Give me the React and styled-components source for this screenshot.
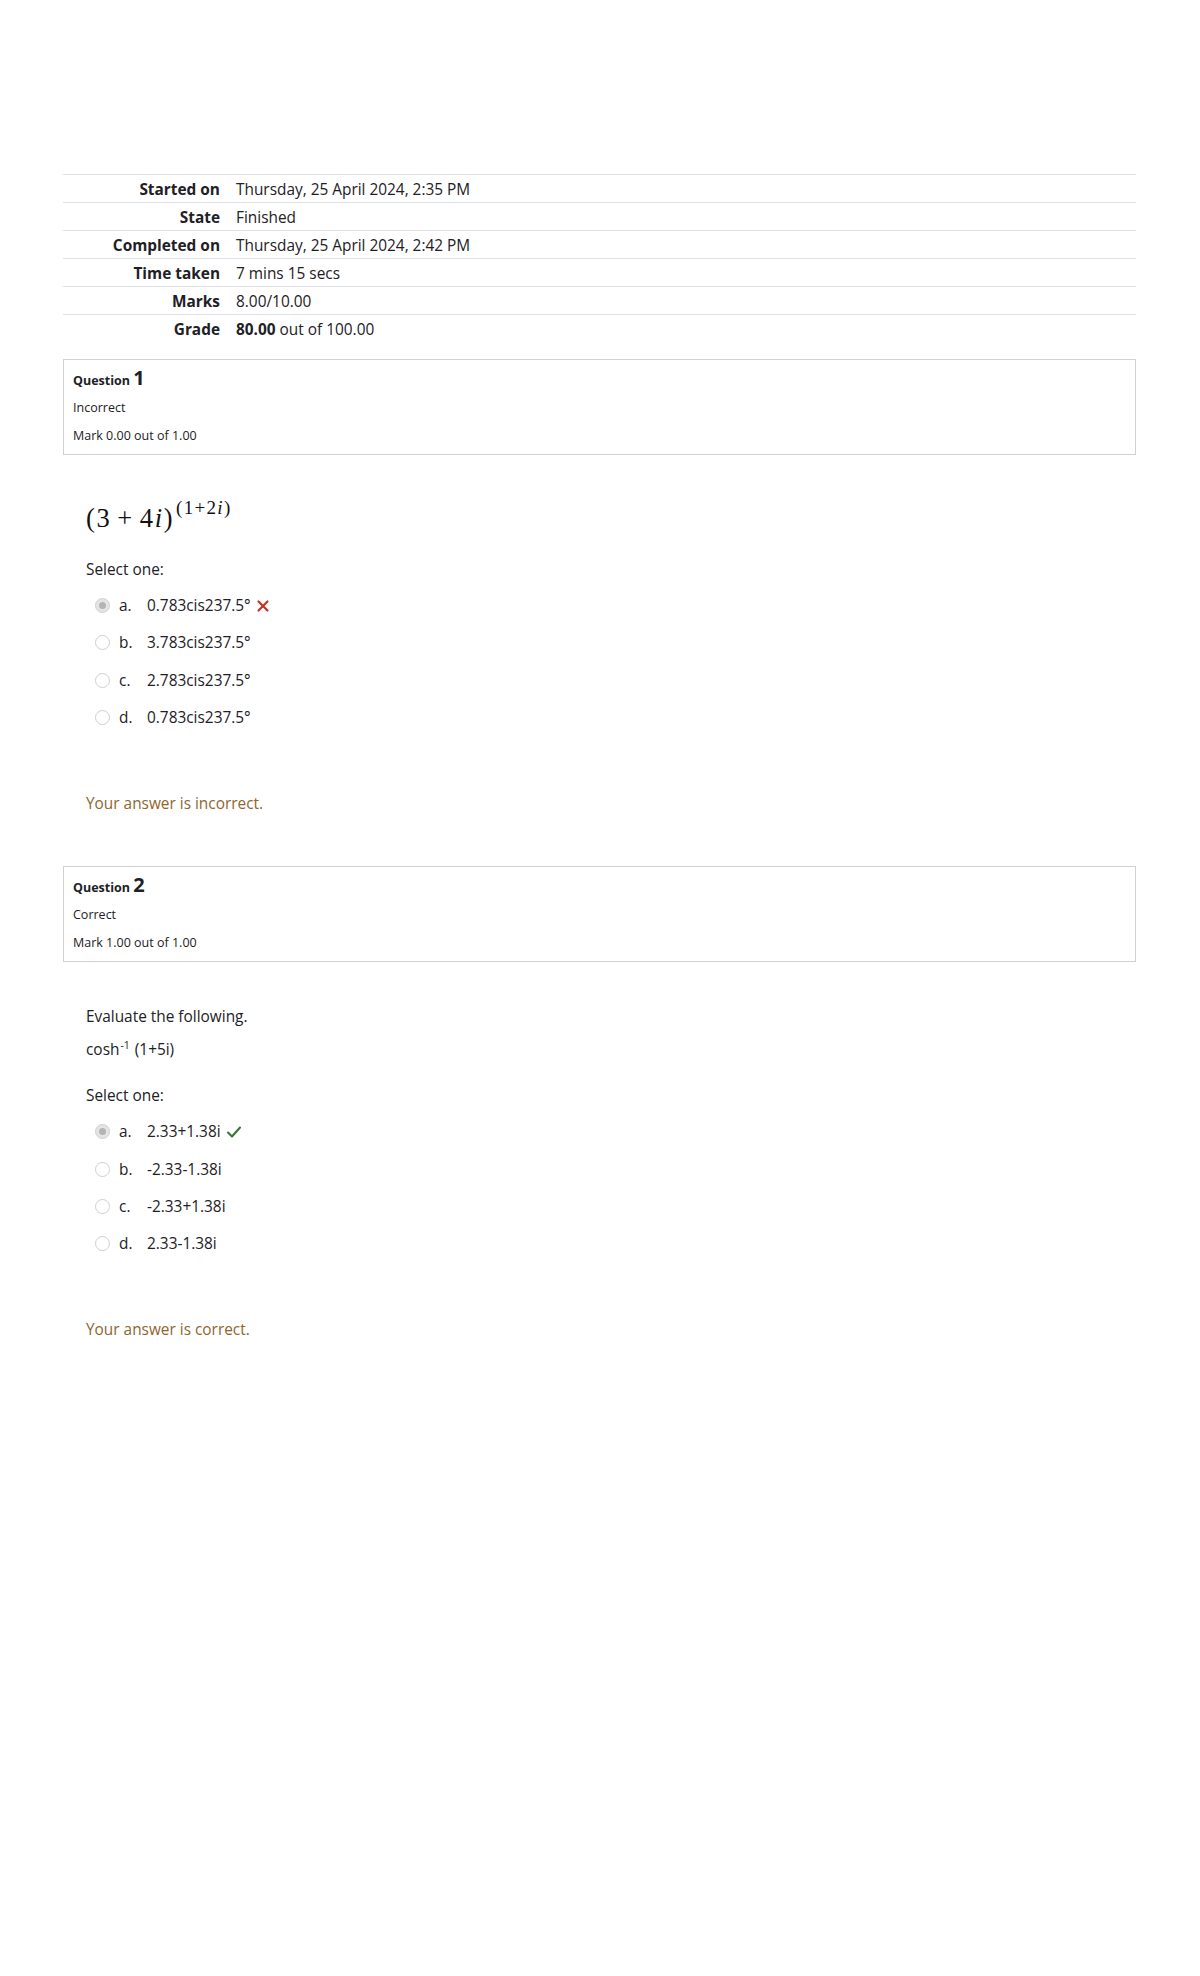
import React from "react";
import styled, { createGlobalStyle } from "styled-components";

const Global = createGlobalStyle`
  html, body { margin: 0; padding: 0; background: #fff; }
  body {
    font-family: "Open Sans", "Noto Sans", "Liberation Sans", sans-serif;
    color: #1d2125;
    font-size: 15.4px;
  }
`;

const Page = styled.div`
  padding: 174px 64px 200px 63px;
  min-height: 1976px;
  box-sizing: border-box;
`;

const Summary = styled.table`
  width: 100%;
  border-collapse: collapse;
  margin-bottom: 17px;
`;

const Row = styled.tr`
  border-top: 1px solid #dee2e6;
`;

const Label = styled.th`
  width: 157px;
  padding: 4px 8px 1px 0;
  text-align: right;
  font-weight: 700;
  line-height: 22px;
  white-space: nowrap;
`;

const Value = styled.td`
  padding: 4px 0 1px 8px;
  line-height: 22px;
  text-align: left;
`;

const InfoBox = styled.div`
  border: 1px solid #cdd1d6;
  padding: 8px 9px 9px;
  background: #fff;
`;

const QTitle = styled.h3`
  margin: 0;
  height: 22px;
  font-size: 12.5px;
  font-weight: 700;
  line-height: 22px;
`;

const QNo = styled.span`
  font-size: 20px;
  font-weight: 700;
  line-height: 1;
`;

const InfoLine = styled.div`
  margin-top: ${(p) => p.$gap}px;
  font-size: 12.5px;
  line-height: 18px;
`;

const Content = styled.div`
  padding-left: 23px;
  margin-top: ${(p) => p.$top}px;
  margin-bottom: 51px;
`;

const MathLine = styled.div`
  height: 40px;
  display: flex;
  align-items: center;
  font-family: "Liberation Serif", "DejaVu Serif", serif;
  font-size: 26.5px;
  letter-spacing: 1.6px;
  color: #111;
`;

const Sup = styled.span`
  font-size: 19px;
  letter-spacing: 1.3px;
  margin-left: 2px;
  position: relative;
  top: -10px;
`;

const Var = styled.i`
  font-style: italic;
`;

const Op = styled.span`
  margin: 0 6px;
`;

const Text = styled.p`
  margin: ${(p) => p.$top || 0}px 0 0;
  line-height: 22px;
`;

const SmallSup = styled.sup`
  font-size: 10.5px;
  vertical-align: 6px;
  line-height: 0;
  margin: 0 5px 0 1px;
`;

const Prompt = styled.div`
  margin-top: ${(p) => p.$top}px;
  line-height: 22px;
`;

const Answers = styled.div`
  margin-top: 6px;
  padding-left: 9px;
`;

const Option = styled.div`
  display: flex;
  align-items: center;
  height: 37.3px;
`;

const Radio = styled.span`
  width: 13px;
  height: 13px;
  border-radius: 50%;
  border: 1px solid #cfcfcf;
  background: ${(p) => (p.$checked ? "#e4e4e4" : "#fff")};
  display: inline-flex;
  align-items: center;
  justify-content: center;
  margin-right: 9px;
  flex: none;
  &::after {
    content: "";
    display: ${(p) => (p.$checked ? "block" : "none")};
    width: 7px;
    height: 7px;
    border-radius: 50%;
    background: #b4b4b4;
  }
`;

const Letter = styled.span`
  width: 28px;
  flex: none;
`;

const AnswerText = styled.span``;

const Mark = styled.span`
  display: inline-flex;
  margin-left: 5px;
`;

const Feedback = styled.div`
  margin-top: ${(p) => p.$top}px;
  color: #8e662e;
  line-height: 22px;
`;

const Cross = () => (
  <svg width="14" height="14" viewBox="0 0 14 14">
    <path d="M2.5 2.5 L11.5 11.5 M11.5 2.5 L2.5 11.5" stroke="#ca3120" strokeWidth="2.2" strokeLinecap="round" />
  </svg>
);

const Check = () => (
  <svg width="16" height="14" viewBox="0 0 16 14">
    <path d="M2 7.5 L6 11.5 L14 2.5" stroke="#357a32" strokeWidth="2.1" fill="none" strokeLinecap="round" strokeLinejoin="round" />
  </svg>
);

const summary = [
  ["Started on", "Thursday, 25 April 2024, 2:35 PM"],
  ["State", "Finished"],
  ["Completed on", "Thursday, 25 April 2024, 2:42 PM"],
  ["Time taken", "7 mins 15 secs"],
  ["Marks", "8.00/10.00"],
  ["Grade", <><b>80.00</b> out of 100.00</>],
];

const QuestionInfo = ({ no, state, mark }) => (
  <InfoBox>
    <QTitle>
      Question <QNo>{no}</QNo>
    </QTitle>
    <InfoLine $gap={9}>{state}</InfoLine>
    <InfoLine $gap={10}>{mark}</InfoLine>
  </InfoBox>
);

const AnswerList = ({ options, selected, result }) => (
  <Answers>
    {options.map((o, i) => (
      <Option key={i}>
        <Radio $checked={i === selected} />
        <Letter>{String.fromCharCode(97 + i)}.</Letter>
        <AnswerText>{o}</AnswerText>
        {i === selected && <Mark>{result === "correct" ? <Check /> : <Cross />}</Mark>}
      </Option>
    ))}
  </Answers>
);

export default function App() {
  return (
    <>
      <Global />
      <Page>
        <Summary>
          <tbody>
            {summary.map(([k, v]) => (
              <Row key={k}>
                <Label>{k}</Label>
                <Value>{v}</Value>
              </Row>
            ))}
          </tbody>
        </Summary>

        <QuestionInfo no="1" state="Incorrect" mark="Mark 0.00 out of 1.00" />
        <Content $top={43}>
          <MathLine>
            <span>(3</span>
            <Op>+</Op>
            <span>4<Var>i</Var>)</span>
            <Sup>(1+2<Var>i</Var>)</Sup>
          </MathLine>
          <Prompt $top={21}>Select one:</Prompt>
          <AnswerList
            options={["0.783cis237.5°", "3.783cis237.5°", "2.783cis237.5°", "0.783cis237.5°"]}
            selected={0}
            result="incorrect"
          />
          <Feedback $top={57}>Your answer is incorrect.</Feedback>
        </Content>

        <QuestionInfo no="2" state="Correct" mark="Mark 1.00 out of 1.00" />
        <Content $top={44}>
          <Text>Evaluate the following.</Text>
          <Text $top={11}>
            cosh<SmallSup>-1</SmallSup>(1+5i)
          </Text>
          <Prompt $top={24}>Select one:</Prompt>
          <AnswerList
            options={["2.33+1.38i", "-2.33-1.38i", "-2.33+1.38i", "2.33-1.38i"]}
            selected={0}
            result="correct"
          />
          <Feedback $top={57}>Your answer is correct.</Feedback>
        </Content>
      </Page>
    </>
  );
}
